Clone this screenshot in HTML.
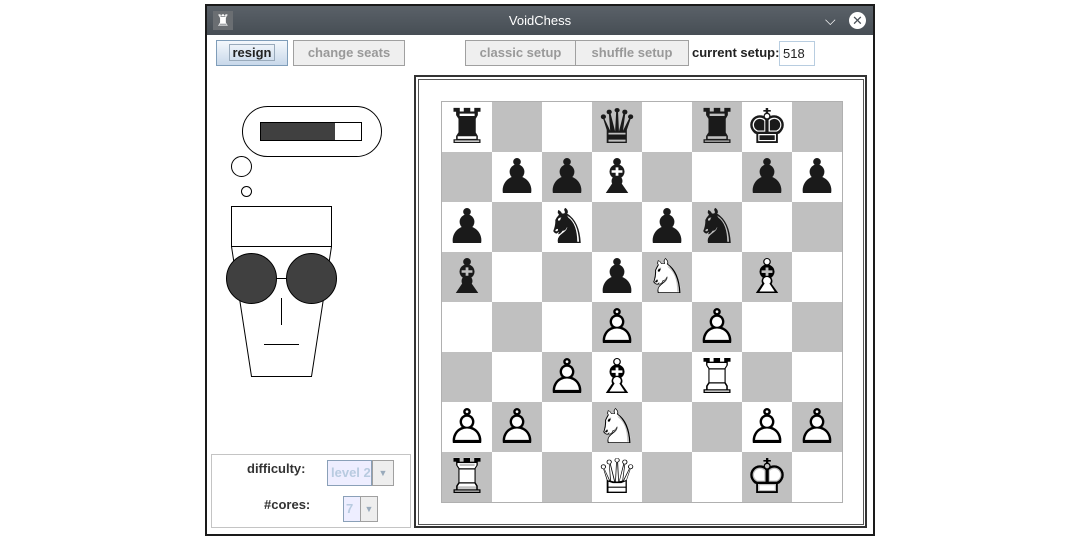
<!DOCTYPE html>
<html><head><style>
body{margin:0;width:1080px;height:540px;background:#fff;position:relative;overflow:hidden;font-family:"Liberation Sans","DejaVu Sans",sans-serif}
.win{position:absolute;left:205px;top:4px;width:666px;height:528px;border:2px solid #1a1a1a;background:#fff}
.title{position:absolute;left:0;top:0;width:666px;height:29px;background:linear-gradient(#5a6168,#474e55);color:#fff;font-size:13px;text-align:center;line-height:29px}
.btn{position:absolute;height:24px;border:1px solid #a0a0a0;background:#efefef;color:#999;font-size:13px;font-weight:bold;text-align:center;line-height:24px;white-space:nowrap}
.a{position:absolute;white-space:nowrap}
.board{position:absolute;left:441px;top:101px;width:400px;height:400px;border:1px solid #b0b0b0;display:grid;grid-template-columns:repeat(8,50px);grid-template-rows:repeat(8,50px)}
.board div{position:relative;font-family:"DejaVu Sans",sans-serif;font-size:48px;line-height:50px;text-align:center;color:#1a1a1a}
.board div b{font-weight:normal;position:absolute;left:0;top:0;width:50px;color:#fff}
.board div i{font-style:normal;position:absolute;left:0;top:0;width:50px;color:#000}
.g{background:#c0c0c0}
</style></head><body>
<div class="win">
<div class="title">VoidChess
<div class="a" style="left:6px;top:5px;width:20px;height:19px;background:#6a6e72;color:#fff;font-size:16px;line-height:19px;font-family:'DejaVu Sans'">♜</div>
<div class="a" style="left:618px;top:0;font-size:14px;color:#fff">⌵</div>
<div class="a" style="left:642px;top:6px;width:17px;height:17px;border-radius:50%;background:#fff;color:#474e55;font-size:13px;line-height:17px;font-weight:bold;text-align:center">✕</div>
</div>
</div>
<div class="btn" style="left:216px;top:40px;width:70px;color:#222;background:linear-gradient(#f4f8fc,#c8d8ea);border-color:#7f9db9"><span style="border:1px solid #9ab;padding:0 2px">resign</span></div>
<div class="btn" style="left:293px;top:40px;width:110px">change seats</div>
<div class="btn" style="left:465px;top:40px;width:109px">classic setup</div>
<div class="btn" style="left:575px;top:40px;width:112px">shuffle setup</div>
<div class="a" style="left:692px;top:45px;font-size:13px;font-weight:bold;color:#222">current setup:</div>
<div class="a" style="left:779px;top:41px;width:36px;height:25px;border:1px solid #b8cde0;font-size:13px;line-height:24px;padding-left:3px;box-sizing:border-box;color:#222">518</div>

<svg class="a" style="left:0;top:0" width="1080" height="540">
<rect x="242.5" y="106.5" width="139" height="50" rx="25" fill="none" stroke="#000"/>
<rect x="260.5" y="122.5" width="101" height="18" fill="#fff" stroke="#000"/>
<rect x="261" y="123" width="74" height="17" fill="#404040"/>
<circle cx="241.5" cy="166.5" r="10" fill="none" stroke="#000"/>
<circle cx="246.5" cy="191.5" r="5" fill="none" stroke="#000"/>
<rect x="231.5" y="206.5" width="100" height="40" fill="none" stroke="#000"/>
<polyline points="231.5,246.5 251.5,376.5 311.5,376.5 331.5,246.5" fill="none" stroke="#000"/>
<line x1="276" y1="278.5" x2="287" y2="278.5" stroke="#000"/>
<circle cx="251.5" cy="278.5" r="25" fill="#404040" stroke="#000"/>
<circle cx="311.5" cy="278.5" r="25" fill="#404040" stroke="#000"/>
<line x1="281.5" y1="298" x2="281.5" y2="325" stroke="#000"/>
<line x1="264" y1="344.5" x2="299" y2="344.5" stroke="#000"/>
<rect x="211.5" y="454.5" width="199" height="73" fill="none" stroke="#c4c4c4"/>
<rect x="415" y="76" width="451" height="451" fill="none" stroke="#333" stroke-width="2"/>
<rect x="418.5" y="79.5" width="445" height="445" fill="none" stroke="#555"/>
</svg>

<div class="a" style="left:247px;top:461px;font-size:13px;font-weight:bold;color:#333">difficulty:</div>
<div class="a" style="left:327px;top:460px;width:45px;height:26px;border:1px solid #8aa0b8;background:#eef;font-size:13px;font-weight:bold;color:#b8cbe0;line-height:24px;padding-left:3px;box-sizing:border-box;overflow:hidden">level 2</div>
<div class="a" style="left:372px;top:460px;width:22px;height:26px;border:1px solid #a0a0a0;background:#eee;color:#9ab;font-size:9px;text-align:center;line-height:24px;box-sizing:border-box">▼</div>
<div class="a" style="left:264px;top:497px;font-size:13px;font-weight:bold;color:#333">#cores:</div>
<div class="a" style="left:343px;top:496px;width:18px;height:26px;border:1px solid #8aa0b8;background:#eef;font-size:13px;font-weight:bold;color:#b8cbe0;line-height:24px;padding-left:2px;box-sizing:border-box">7</div>
<div class="a" style="left:360px;top:496px;width:18px;height:26px;border:1px solid #a0a0a0;background:#eee;color:#9ab;font-size:9px;text-align:center;line-height:24px;box-sizing:border-box">▼</div>

<div class="board">
<div>♜</div><div class="g"></div><div></div><div class="g">♛</div><div></div><div class="g">♜</div><div>♚</div><div class="g"></div>
<div class="g"></div><div>♟</div><div class="g">♟</div><div>♝</div><div class="g"></div><div></div><div class="g">♟</div><div>♟</div>
<div>♟</div><div class="g"></div><div>♞</div><div class="g"></div><div>♟</div><div class="g">♞</div><div></div><div class="g"></div>
<div class="g">♝</div><div></div><div class="g"></div><div>♟</div><div class="g"><b>♞</b><i>♘</i></div><div></div><div class="g"><b>♝</b><i>♗</i></div><div></div>
<div></div><div class="g"></div><div></div><div class="g"><b>♟</b><i>♙</i></div><div></div><div class="g"><b>♟</b><i>♙</i></div><div></div><div class="g"></div>
<div class="g"></div><div></div><div class="g"><b>♟</b><i>♙</i></div><div><b>♝</b><i>♗</i></div><div class="g"></div><div><b>♜</b><i>♖</i></div><div class="g"></div><div></div>
<div><b>♟</b><i>♙</i></div><div class="g"><b>♟</b><i>♙</i></div><div></div><div class="g"><b>♞</b><i>♘</i></div><div></div><div class="g"></div><div><b>♟</b><i>♙</i></div><div class="g"><b>♟</b><i>♙</i></div>
<div class="g"><b>♜</b><i>♖</i></div><div></div><div class="g"></div><div><b>♛</b><i>♕</i></div><div class="g"></div><div></div><div class="g"><b>♚</b><i>♔</i></div><div></div>
</div>
</body></html>
